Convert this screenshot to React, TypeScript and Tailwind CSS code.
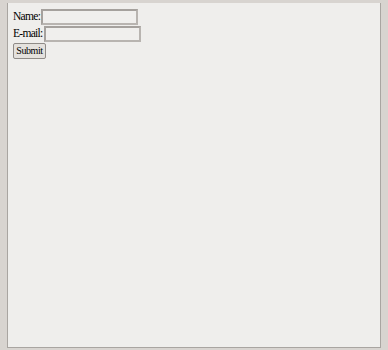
import React from "react";

const App = () => {
  return (
    <div className="w-[388px] h-[350px] bg-[#d8d4d0] pt-[3px] pl-[7px] pr-[7px] pb-[2px] flex">
      <div
        className="flex-1 bg-[#efeeec] border-l border-r border-b border-[#a9a5a1] pl-[5px] pt-[6px] text-[11.5px] leading-none text-black tracking-[-0.7px]"
        style={{ fontFamily: '"Liberation Serif", "Times New Roman", serif' }}
      >
        <form onSubmit={(e) => e.preventDefault()} className="flex flex-col items-start gap-[1px]">
          <div className="flex items-center gap-[1px]">
            <label htmlFor="name">Name:</label>
            <input
              id="name"
              type="text"
              className="w-[97px] h-[16px] bg-[#f0efed] border-2 border-[#a5a19d] border-b-[#b8b4b0] border-r-[#b8b4b0] outline-none"
            />
          </div>
          <div className="flex items-center gap-[1px]">
            <label htmlFor="email">E-mail:</label>
            <input
              id="email"
              type="text"
              className="w-[97px] h-[16px] bg-[#f0efed] border-2 border-[#a5a19d] border-b-[#b8b4b0] border-r-[#b8b4b0] outline-none"
            />
          </div>
          <button
            type="submit"
            className="w-[33px] h-[16px] bg-[#e4e1dd] border border-[#8f8b87] rounded-[2px] text-[10px] tracking-[-0.4px] text-black"
          >
            Submit
          </button>
        </form>
      </div>
    </div>
  );
};

export default App;
